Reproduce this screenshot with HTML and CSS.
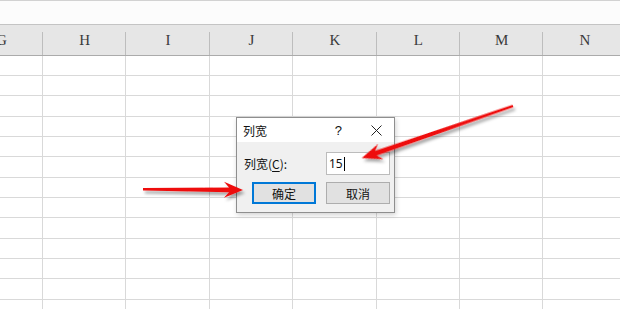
FILE: index.html
```html
<!DOCTYPE html>
<html lang="zh-CN">
<head>
  <meta charset="UTF-8">
  <title>列宽</title>
  <link rel="stylesheet" href="styles.css">
</head>
<body>

  <div class="sheet">
    <div class="formula-bar"></div>

    <div class="col-head">
      <div class="ch">G</div>
      <div class="ch">H</div>
      <div class="ch">I</div>
      <div class="ch">J</div>
      <div class="ch">K</div>
      <div class="ch">L</div>
      <div class="ch">M</div>
      <div class="ch">N</div>
    </div>

    <div class="grid">
      <div class="row first"><span></span><span></span><span></span><span></span><span></span><span></span><span></span><span></span></div>
      <div class="row"><span></span><span></span><span></span><span></span><span></span><span></span><span></span><span></span></div>
      <div class="row"><span></span><span></span><span></span><span></span><span></span><span></span><span></span><span></span></div>
      <div class="row"><span></span><span></span><span></span><span></span><span></span><span></span><span></span><span></span></div>
      <div class="row"><span></span><span></span><span></span><span></span><span></span><span></span><span></span><span></span></div>
      <div class="row"><span></span><span></span><span></span><span></span><span></span><span></span><span></span><span></span></div>
      <div class="row"><span></span><span></span><span></span><span></span><span></span><span></span><span></span><span></span></div>
      <div class="row"><span></span><span></span><span></span><span></span><span></span><span></span><span></span><span></span></div>
      <div class="row"><span></span><span></span><span></span><span></span><span></span><span></span><span></span><span></span></div>
      <div class="row"><span></span><span></span><span></span><span></span><span></span><span></span><span></span><span></span></div>
      <div class="row"><span></span><span></span><span></span><span></span><span></span><span></span><span></span><span></span></div>
      <div class="row"><span></span><span></span><span></span><span></span><span></span><span></span><span></span><span></span></div>
      <div class="row"><span></span><span></span><span></span><span></span><span></span><span></span><span></span><span></span></div>
    </div>
  </div>

  <!-- column width dialog -->
  <div class="dialog">
    <div class="dlg-title">
      <span class="dlg-name">列宽</span>
      <span class="dlg-help">?</span>
      <svg class="dlg-close" width="11" height="11" viewBox="0 0 11 11">
        <path d="M0.5 0.5 L10.5 10.5 M10.5 0.5 L0.5 10.5" stroke="#222" stroke-width="1" fill="none"/>
      </svg>
    </div>
    <div class="dlg-body">
      <div class="dlg-field">
        <label>列宽(<u>C</u>):</label>
        <div class="dlg-input">15<i class="caret"></i></div>
      </div>
      <div class="dlg-buttons">
        <button class="btn default">确定</button>
        <button class="btn">取消</button>
      </div>
    </div>
  </div>

  <svg class="arrows" width="620" height="309" viewBox="0 0 620 309">
    <defs>
      <filter id="shade" x="-20%" y="-50%" width="140%" height="200%">
        <feDropShadow dx="2" dy="3" stdDeviation="1.6" flood-color="#000" flood-opacity="0.35"/>
      </filter>
    </defs>
    <g filter="url(#shade)" fill="#ee1111">
      <path transform="translate(143 189.2) rotate(0.4)" d="M0,-1.3 L86,-2.4 L81,-8 L100,0 L81,8 L86,2.4 L0,1.3 Z"/>
      <path transform="translate(513 106) rotate(161)" d="M0,-1.3 L145,-2.4 L140,-8 L160,0 L140,8 L145,2.4 L0,1.3 Z"/>
    </g>
  </svg>

</body>
</html>
```

FILE: styles.css
```css
body {
  margin: 0;
  width: 620px;
  height: 309px;
  overflow: hidden;
  position: relative;
  background: #fff;
  font-family: "Noto Sans CJK SC", "Noto Sans", sans-serif;
}

.sheet {
  width: 620px;
  overflow: hidden;
}

.formula-bar {
  height: 25px;
  box-sizing: border-box;
  border-top: 1px solid #d2d2d2;
  border-bottom: 1px solid #c4c4c4;
  background: #fcfcfc;
}

.col-head {
  display: flex;
  margin-left: -40.4px;
  height: 31px;
  box-sizing: border-box;
  background: #e6e6e6;
  border-bottom: 1px solid #ababab;
}

.ch {
  flex: 0 0 83.4px;
  box-sizing: border-box;
  text-align: center;
  font-family: "Liberation Serif", serif;
  font-size: 15px;
  line-height: 31px;
  color: #3a3a3a;
  background: linear-gradient(#bdbdbd, #bdbdbd) right bottom / 1px 23px no-repeat;
}

.grid {
  margin-left: -40.4px;
}

.row {
  display: flex;
  height: 20.33px;
  box-sizing: border-box;
  border-bottom: 1px solid #d9d9d9;
}

.row.first {
  height: 20px;
}

.row span {
  flex: 0 0 83.4px;
  box-sizing: border-box;
  border-right: 1px solid #d9d9d9;
}

.dialog {
  position: absolute;
  left: 236px;
  top: 117px;
  width: 159px;
  height: 96px;
  box-sizing: border-box;
  border: 1px solid #8e8e8e;
  background: #f0f0f0;
  box-shadow: 1px 2px 5px rgba(0, 0, 0, 0.18);
  font-size: 12px;
  color: #111;
}

.dlg-title {
  display: flex;
  align-items: center;
  height: 24px;
  background: #fff;
  padding-left: 6px;
  padding-right: 12px;
}

.dlg-name {
  flex: 1;
}

.dlg-help {
  font-family: "Liberation Sans", sans-serif;
  font-size: 13px;
  margin-right: 29px;
}

.dlg-close {
  display: block;
}

.dlg-body {
  padding: 10px 4px 0 7px;
}

.dlg-field {
  display: flex;
  align-items: center;
  justify-content: space-between;
}

.dlg-field u {
  text-underline-offset: 2px;
}

.dlg-input {
  width: 64px;
  height: 23px;
  box-sizing: border-box;
  border: 1px solid #bcbcbc;
  background: #fff;
  padding-left: 2px;
  font-family: "Noto Sans", sans-serif;
  font-size: 12px;
  line-height: 21px;
}

.caret {
  display: inline-block;
  width: 1px;
  height: 14px;
  background: #000;
  vertical-align: -3px;
  margin-left: 1px;
}

.dlg-buttons {
  display: flex;
  justify-content: flex-end;
  gap: 10px;
  margin-top: 7px;
}

.btn {
  width: 64px;
  height: 22px;
  padding: 0;
  box-sizing: border-box;
  border: 1px solid #adadad;
  background: #e1e1e1;
  font-family: "Noto Sans CJK SC", sans-serif;
  font-size: 12px;
  color: #111;
}

.btn.default {
  border: 2px solid #0078d7;
}

.arrows {
  position: absolute;
  left: 0;
  top: 0;
  pointer-events: none;
}
```
